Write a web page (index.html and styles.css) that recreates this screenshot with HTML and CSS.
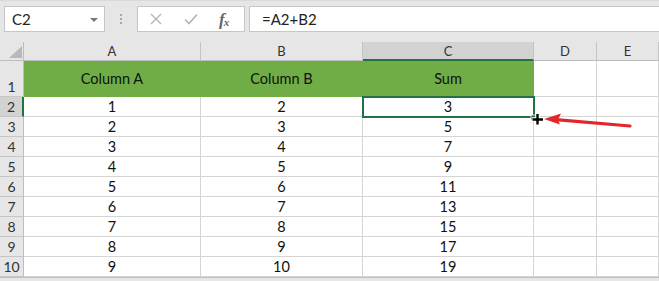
FILE: index.html
```html
<!DOCTYPE html>
<html>
<head>
<meta charset="utf-8">
<link rel="stylesheet" href="styles.css">
</head>
<body>
<div class="bar">
  <div class="namebox">C2<span class="caret"></span></div>
  <div class="dots"><span></span><span></span><span></span></div>
  <div class="fxbox">
    <svg class="ic-x" width="12" height="12" viewBox="0 0 12 12"><path d="M1 1L11 11M11 1L1 11" stroke="#b4b4b4" stroke-width="1.3" fill="none"/></svg>
    <svg class="ic-ok" width="14" height="12" viewBox="0 0 14 12"><path d="M1 6.5L5 10.5L13 1.5" stroke="#b4b4b4" stroke-width="1.6" fill="none"/></svg>
    <span class="fx">f<sub>x</sub></span>
  </div>
  <div class="formula">=A2+B2</div>
</div>
<div class="sheet">
  <div class="corner"><svg width="24" height="19" viewBox="0 0 24 19"><polygon points="22,4 22,16 9,16" fill="#b9b9b9"/></svg></div>
  <div class="ch">A</div><div class="ch">B</div><div class="ch sel">C</div><div class="ch">D</div><div class="ch">E</div>

  <div class="rh">1</div><div class="c g">Column A</div><div class="c g">Column B</div><div class="c g">Sum</div><div class="c"></div><div class="c"></div>
  <div class="rh sel">2</div><div class="c">1</div><div class="c">2</div><div class="c sel">3</div><div class="c"></div><div class="c"></div>
  <div class="rh">3</div><div class="c">2</div><div class="c">3</div><div class="c">5</div><div class="c"></div><div class="c"></div>
  <div class="rh">4</div><div class="c">3</div><div class="c">4</div><div class="c">7</div><div class="c"></div><div class="c"></div>
  <div class="rh">5</div><div class="c">4</div><div class="c">5</div><div class="c">9</div><div class="c"></div><div class="c"></div>
  <div class="rh">6</div><div class="c">5</div><div class="c">6</div><div class="c">11</div><div class="c"></div><div class="c"></div>
  <div class="rh">7</div><div class="c">6</div><div class="c">7</div><div class="c">13</div><div class="c"></div><div class="c"></div>
  <div class="rh">8</div><div class="c">7</div><div class="c">8</div><div class="c">15</div><div class="c"></div><div class="c"></div>
  <div class="rh">9</div><div class="c">8</div><div class="c">9</div><div class="c">17</div><div class="c"></div><div class="c"></div>
  <div class="rh">10</div><div class="c">9</div><div class="c">10</div><div class="c">19</div><div class="c"></div><div class="c"></div>
</div>
<svg class="overlay" width="659" height="281" viewBox="0 0 659 281">
  <rect x="531" y="115" width="5" height="5" fill="#217346" stroke="#fff" stroke-width="0.8"/>
  <path d="M537.5 113.5V125M532 119.5H543.5" stroke="#fff" stroke-width="4.5" fill="none"/>
  <path d="M537.5 114V124.5M532.5 119.5H543" stroke="#000" stroke-width="2.4" fill="none"/>
  <path d="M556 119.6L630 126" stroke="#e3262a" stroke-width="3.2" stroke-linecap="round" fill="none"/>
  <polygon points="544,119 561,113.5 558,119.8 560,124.5" fill="#e3262a"/>
</svg>
</body>
</html>
```
FILE: styles.css
```css
* { box-sizing: border-box; }
html, body { margin: 0; padding: 0; }
body {
  width: 659px;
  height: 281px;
  overflow: hidden;
  background: #e6e6e6;
  font-family: Lato, "Open Sans", sans-serif;
  position: relative;
}
.bar {
  display: flex;
  height: 32px;
  padding: 5px 0 0 4px;
  border-top: 1px solid #d9d9d9;
}
.namebox {
  width: 101px;
  background: #fff;
  border: 1px solid #c6c6c6;
  display: flex;
  align-items: center;
  padding-left: 7px;
  font-size: 15px;
  color: #222;
  position: relative;
}
.caret {
  position: absolute;
  right: 6px;
  top: 11px;
  width: 0;
  height: 0;
  border-left: 4px solid transparent;
  border-right: 4px solid transparent;
  border-top: 4px solid #7a7a7a;
}
.dots {
  width: 32px;
  display: flex;
  flex-direction: column;
  align-items: center;
  justify-content: center;
  gap: 2px;
}
.dots span {
  width: 2px;
  height: 2px;
  background: #a8a8a8;
}
.fxbox {
  width: 108px;
  background: #fff;
  border: 1px solid #c6c6c6;
  display: flex;
  align-items: center;
  padding-left: 12px;
}
.ic-x { margin-right: 22px; }
.ic-ok { margin-right: 21px; }
.fx {
  font-family: "Liberation Serif", serif;
  font-style: italic;
  font-weight: bold;
  font-size: 17px;
  color: #666;
  line-height: 1;
  letter-spacing: -1px;
}
.fx sub { font-size: 11px; vertical-align: -1px; }
.formula {
  flex: 1;
  margin-left: 4px;
  margin-right: -2px;
  background: #fff;
  border: 1px solid #c6c6c6;
  display: flex;
  align-items: center;
  padding-left: 12px;
  font-size: 15px;
  color: #222;
}
.sheet {
  margin-top: 10px;
  display: grid;
  grid-template-columns: 24px 177px 162px 171px 63px 62px;
  grid-template-rows: 19px 36px repeat(9, 20px);
  border-bottom: 1px solid #c0c0c0;
}
.corner {
  background: #e6e6e6;
  border-right: 1px solid #bdbdbd;
  border-bottom: 1px solid #bdbdbd;
}
.corner svg { display: block; }
.ch {
  background: #e6e6e6;
  border-right: 1px solid #c4c4c4;
  border-bottom: 1px solid #bdbdbd;
  display: flex;
  align-items: center;
  justify-content: center;
  font-size: 13px;
  color: #333;
}
.ch.sel {
  background: #d2d2d2;
  border-bottom: 2px solid #217346;
}
.rh {
  background: #e6e6e6;
  border-right: 1px solid #bdbdbd;
  border-bottom: 1px solid #c6c6c6;
  display: flex;
  align-items: flex-end;
  justify-content: center;
  font-size: 14px;
  color: #333;
  padding-bottom: 1px;
}
.rh.sel {
  background: #d2d2d2;
  border-right: 2px solid #217346;
}
.c {
  background: #fff;
  border-right: 1px solid #d4d4d4;
  border-bottom: 1px solid #d4d4d4;
  display: flex;
  align-items: center;
  justify-content: center;
  font-size: 14.5px;
  color: #111;
}
.c.g {
  background: #70ad47;
  border-color: #70ad47;
}
.c.sel {
  outline: 2px solid #217346;
  outline-offset: -1px;
  position: relative;
  z-index: 1;
}
.overlay {
  position: absolute;
  left: 0;
  top: 0;
  pointer-events: none;
  z-index: 2;
}
```
